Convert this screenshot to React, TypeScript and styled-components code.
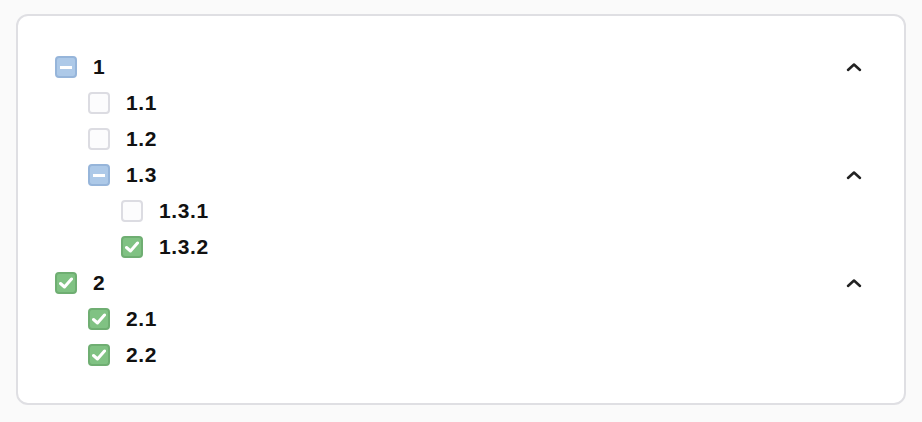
import React from "react";
import styled, { createGlobalStyle } from "styled-components";

const Global = createGlobalStyle`
  html, body { margin: 0; padding: 0; background: #fafafa; }
  body { font-family: "Liberation Sans", Arial, sans-serif; }
`;

const Page = styled.div`
  padding: 14px 16px 0 16px;
`;

const Card = styled.div`
  box-sizing: border-box;
  width: 890px;
  height: 391px;
  background: #ffffff;
  border: 2px solid #dfdfe3;
  border-radius: 12px;
  padding: 33px 40px 29px 37px;
`;

const Row = styled.div<{ $level: number }>`
  display: flex;
  align-items: center;
  height: 36px;
  padding-left: ${(p) => p.$level * 33}px;
`;

const Box = styled.span<{ $state: "on" | "off" | "mixed" }>`
  box-sizing: border-box;
  width: 22px;
  height: 22px;
  border-radius: 4px;
  display: flex;
  align-items: center;
  justify-content: center;
  flex-shrink: 0;
  border: 2px solid
    ${(p) => (p.$state === "on" ? "#6fae72" : p.$state === "mixed" ? "#96b5da" : "#dcdce2")};
  background: ${(p) => (p.$state === "on" ? "#80c283" : p.$state === "mixed" ? "#adc9e8" : "#fcfcfd")};
`;

const Dash = styled.span`
  width: 12px;
  height: 3px;
  background: #ffffff;
`;

const Label = styled.span`
  margin-left: 16px;
  font-size: 21px;
  font-weight: 700;
  letter-spacing: 0.6px;
  color: #111;
  flex: 1;
`;

const Toggle = styled.span`
  width: 20px;
  display: flex;
  justify-content: center;
  align-items: center;
`;

type Node = { label: string; level: number; state: "on" | "off" | "mixed"; parent?: boolean };

const nodes: Node[] = [
  { label: "1", level: 0, state: "mixed", parent: true },
  { label: "1.1", level: 1, state: "off" },
  { label: "1.2", level: 1, state: "off" },
  { label: "1.3", level: 1, state: "mixed", parent: true },
  { label: "1.3.1", level: 2, state: "off" },
  { label: "1.3.2", level: 2, state: "on" },
  { label: "2", level: 0, state: "on", parent: true },
  { label: "2.1", level: 1, state: "on" },
  { label: "2.2", level: 1, state: "on" },
];

const Check = () => (
  <svg width="14" height="12" viewBox="0 0 14 12">
    <polyline points="1.5,6.5 5.5,10 12.5,2" fill="none" stroke="#fff" strokeWidth="3" strokeLinecap="round" strokeLinejoin="round" />
  </svg>
);

const Chevron = () => (
  <svg width="16" height="10" viewBox="0 0 16 10">
    <polyline points="2,8 8,2.5 14,8" fill="none" stroke="#222" strokeWidth="2.5" strokeLinecap="round" strokeLinejoin="round" />
  </svg>
);

export default function App() {
  return (
    <>
      <Global />
      <Page>
        <Card>
          {nodes.map((n) => (
            <Row key={n.label} $level={n.level}>
              <Box $state={n.state}>
                {n.state === "on" && <Check />}
                {n.state === "mixed" && <Dash />}
              </Box>
              <Label>{n.label}</Label>
              {n.parent && (
                <Toggle>
                  <Chevron />
                </Toggle>
              )}
            </Row>
          ))}
        </Card>
      </Page>
    </>
  );
}
